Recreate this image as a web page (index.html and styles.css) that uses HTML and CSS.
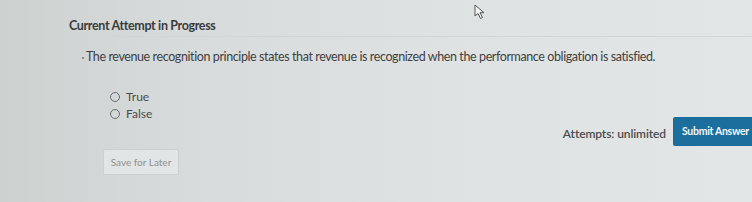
FILE: index.html
```html
<!DOCTYPE html>
<html lang="en">

<head>
    <meta charset="UTF-8">
    <meta name="viewport" content="width=device-width, initial-scale=1.0">
    <title>Current Attempt in Progress</title>
    <link rel="stylesheet" href="styles.css">
</head>

<body>

    <div class="screen">
        <div class="attempt-header">Current Attempt in Progress</div>

        <p class="question"><span class="bullet"></span>The revenue recognition principle states that revenue is recognized when the performance obligation is satisfied.</p>

        <div class="options">
            <label class="option"><span class="radio"></span>True</label>
            <label class="option"><span class="radio"></span>False</label>
        </div>

        <div class="actions">
            <span class="attempts">Attempts: unlimited</span>
            <button class="submit-btn">Submit Answer</button>
        </div>

        <div class="save-row">
            <button class="save-btn">Save for Later</button>
        </div>

        <!-- mouse pointer over the page -->
        <svg class="cursor" width="12" height="16" viewBox="0 0 12 16">
            <path d="M1 1 L1 12 L4 9.5 L6.5 14.5 L8.5 13.5 L6 8.7 L10 8.7 Z" fill="#f4f5f5" stroke="#555" stroke-width="1" stroke-linejoin="round"/>
        </svg>
    </div>

</body>

</html>
```

FILE: styles.css
```css
html, body {
    margin: 0;
    height: 100%;
    overflow: hidden;
}

body {
    font-family: Lato, "Open Sans", sans-serif;
    color: #3d3f40;
    background: linear-gradient(90deg, #cdd1d0 0%, #d8dbdb 25%, #dfe2e2 60%, #e3e6e6 100%);
}

.screen {
    position: relative;
    height: 202px;
    padding-left: 69px;
}

.attempt-header {
    padding-top: 19px;
    padding-bottom: 3px;
    font-size: 12.5px;
    font-weight: 700;
    letter-spacing: -0.35px;
    line-height: 14px;
    color: #3a3c3d;
    border-bottom: 1px solid #d2d5d5;
}

.question {
    margin: 12px 0 0 0;
    padding-left: 17px;
    font-size: 12.5px;
    letter-spacing: -0.4px;
    line-height: 16px;
    color: #3f4142;
    position: relative;
}

.bullet {
    position: absolute;
    left: 13px;
    top: 8px;
    width: 2px;
    height: 2px;
    background: #8a8c8c;
}

.options {
    margin-top: 25px;
    padding-left: 41px;
    display: flex;
    flex-direction: column;
    gap: 3px;
}

.option {
    display: flex;
    align-items: center;
    font-size: 12px;
    line-height: 14px;
    color: #4a4c4d;
}

.radio {
    width: 8px;
    height: 8px;
    border: 1px solid #6a6c6d;
    border-radius: 50%;
    margin-right: 6px;
}

.actions {
    margin-top: -4px;
    margin-right: -20px;
    display: flex;
    justify-content: flex-end;
    align-items: center;
    gap: 7px;
}

.attempts {
    font-size: 12px;
    font-weight: 600;
    letter-spacing: -0.1px;
    color: #4a4c4d;
    padding-top: 3px;
}

.submit-btn {
    width: 99px;
    height: 29px;
    padding: 0 0 2px 9px;
    text-align: left;
    border: none;
    border-radius: 2px;
    background: #1c6f9c;
    color: #f2f6f8;
    font-family: Lato, "Open Sans", sans-serif;
    font-size: 10.5px;
    font-weight: 700;
    letter-spacing: -0.3px;
}

.save-row {
    margin-top: 3px;
    padding-left: 34px;
}

.save-btn {
    width: 76px;
    height: 26px;
    padding: 0;
    border: 1px solid #cdd0d0;
    border-radius: 2px;
    background: #e2e5e5;
    color: #8e9191;
    font-family: Lato, "Open Sans", sans-serif;
    font-size: 10px;
}

.cursor {
    position: absolute;
    left: 474px;
    top: 4px;
}
```
